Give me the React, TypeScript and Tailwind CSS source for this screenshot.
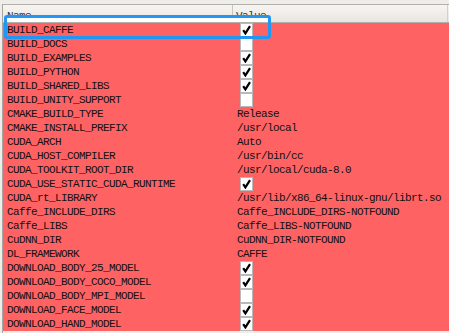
import React from "react";

type Row = { name: string; value: string | boolean };

const rows: Row[] = [
  { name: "BUILD_CAFFE", value: true },
  { name: "BUILD_DOCS", value: false },
  { name: "BUILD_EXAMPLES", value: true },
  { name: "BUILD_PYTHON", value: true },
  { name: "BUILD_SHARED_LIBS", value: true },
  { name: "BUILD_UNITY_SUPPORT", value: false },
  { name: "CMAKE_BUILD_TYPE", value: "Release" },
  { name: "CMAKE_INSTALL_PREFIX", value: "/usr/local" },
  { name: "CUDA_ARCH", value: "Auto" },
  { name: "CUDA_HOST_COMPILER", value: "/usr/bin/cc" },
  { name: "CUDA_TOOLKIT_ROOT_DIR", value: "/usr/local/cuda-8.0" },
  { name: "CUDA_USE_STATIC_CUDA_RUNTIME", value: true },
  { name: "CUDA_rt_LIBRARY", value: "/usr/lib/x86_64-linux-gnu/librt.so" },
  { name: "Caffe_INCLUDE_DIRS", value: "Caffe_INCLUDE_DIRS-NOTFOUND" },
  { name: "Caffe_LIBS", value: "Caffe_LIBS-NOTFOUND" },
  { name: "CuDNN_DIR", value: "CuDNN_DIR-NOTFOUND" },
  { name: "DL_FRAMEWORK", value: "CAFFE" },
  { name: "DOWNLOAD_BODY_25_MODEL", value: true },
  { name: "DOWNLOAD_BODY_COCO_MODEL", value: true },
  { name: "DOWNLOAD_BODY_MPI_MODEL", value: false },
  { name: "DOWNLOAD_FACE_MODEL", value: true },
  { name: "DOWNLOAD_HAND_MODEL", value: true },
];

const CheckBox: React.FC<{ checked: boolean }> = ({ checked }) => (
  <div className="w-[13px] h-[14px] bg-white border border-[#b9b9b9] flex items-center justify-center">
    {checked && (
      <svg width="9" height="10" viewBox="0 0 9 10">
        <path d="M1.2 5.2 L3.4 8.4 L8 1.2" fill="none" stroke="#000" strokeWidth="2.2" />
      </svg>
    )}
  </div>
);

export default function App() {
  return (
    <div
      className="relative w-[449px] h-[333px] overflow-hidden bg-[#efedea] pl-[2px] pt-[4px] text-[11px] tracking-[-0.6px] text-[#111]"
      style={{ fontFamily: '"Liberation Mono", "Courier New", monospace' }}
    >
      <div className="border-l border-[#a8a6a2] h-full">
        {/* header */}
        <div className="flex h-[19px] leading-[14px] border-t border-b border-[#b3b0ab] bg-gradient-to-b from-[#f7f5f2] to-[#e9e6e1]">
          <div className="w-[230px] pl-[4px] pt-[4px] border-r border-[#c9c6c1] text-[#333]">Name</div>
          <div className="flex-1 pl-[3px] pt-[4px] border-r border-[#d4d1cc] mr-[1px] text-[#333]">Value</div>
        </div>
        {/* rows */}
        <div className="bg-[#ff6262]">
          {rows.map((r) => (
            <div key={r.name} className="flex h-[14px] items-start leading-[15px]">
              <div className="w-[230px] pl-[4px] whitespace-nowrap">{r.name}</div>
              <div className="flex-1 pl-[4px] whitespace-nowrap">
                {typeof r.value === "boolean" ? (
                  <div className="pl-[3px]">
                    <CheckBox checked={r.value} />
                  </div>
                ) : (
                  r.value
                )}
              </div>
            </div>
          ))}
        </div>
      </div>
      {/* highlight annotation */}
      <div className="absolute left-[4px] top-[15px] w-[267px] h-[24px] border-[3px] border-[#2196f3] rounded-[3px]">
        <div className="h-[4px] bg-white"></div>
      </div>
    </div>
  );
}
